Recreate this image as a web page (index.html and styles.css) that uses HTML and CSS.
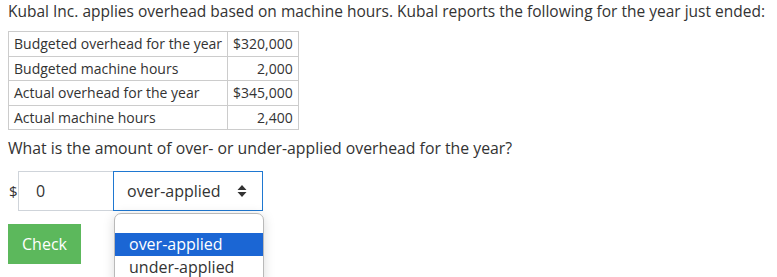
FILE: index.html
```html
<!DOCTYPE html>
<html lang="en">
<head>
    <meta charset="UTF-8">
    <title>Overhead question</title>
    <link rel="stylesheet" href="styles.css">
</head>
<body>
    <div class="question">
        <p class="intro">Kubal Inc. applies overhead based on machine hours. Kubal reports the following for the year just ended:</p>
        <table class="data">
            <tr><td>Budgeted overhead for the year</td><td class="num">$320,000</td></tr>
            <tr><td>Budgeted machine hours</td><td class="num">2,000</td></tr>
            <tr><td>Actual overhead for the year</td><td class="num">$345,000</td></tr>
            <tr><td>Actual machine hours</td><td class="num">2,400</td></tr>
        </table>
        <p class="ask">What is the amount of over- or under-applied overhead for the year?</p>
        <div class="answer">
            <span class="dollar">$</span>
            <input class="amount" type="text" value="0" aria-label="amount">
            <div class="picker">
                <div class="select">
                    <span>over-applied</span>
                    <svg class="arrows" width="10" height="14" viewBox="0 0 10 14">
                        <path d="M5 1 L9.5 6 H0.5 Z M5 13 L9.5 8 H0.5 Z" fill="#333"/>
                    </svg>
                </div>
                <ul class="options">
                    <li class="blank"></li>
                    <li class="active">over-applied</li>
                    <li>under-applied</li>
                </ul>
            </div>
        </div>
        <button class="check-btn">Check</button>
    </div>
</body>
</html>
```

FILE: styles.css
```css
html {
    height: 277px;
}
body {
    font-family: 'Open Sans', sans-serif;
    margin: 0;
    padding: 0 8px;
    height: 277px;
    color: #333333;
    background-color: white;
    overflow: hidden;
}
.intro {
    margin: 0;
    font-size: 15.5px;
    line-height: 23px;
    white-space: nowrap;
}
.data {
    border-collapse: collapse;
    margin-top: 8px;
    font-size: 14px;
}
.data td {
    border: 1px solid #cccccc;
    padding: 2px 5px;
    height: 19.5px;
}
.data .num {
    text-align: right;
}
.ask {
    margin: 7px 0 0;
    font-size: 15.8px;
    line-height: 23px;
}
.answer {
    display: flex;
    align-items: flex-start;
    margin-top: 11px;
    height: 40px;
}
.dollar {
    font-size: 15px;
    line-height: 40px;
    width: 9px;
    padding-left: 1px;
}
.amount {
    width: 95px;
    height: 40px;
    box-sizing: border-box;
    border: 1px solid #cfd4da;
    border-right: none;
    padding: 0 17px;
    font-family: 'Open Sans', sans-serif;
    font-size: 16px;
    color: #333333;
    outline: none;
}
.picker {
    position: relative;
}
.select {
    width: 150px;
    height: 40px;
    box-sizing: border-box;
    border: 1px solid #1f78d1;
    display: flex;
    align-items: center;
    justify-content: space-between;
    padding: 0 15px 0 13px;
    font-size: 16px;
}
.options {
    position: absolute;
    top: 42px;
    left: 1px;
    width: 150px;
    margin: 0;
    padding: 0;
    list-style: none;
    background-color: white;
    border: 1px solid #b9b9b9;
    border-radius: 7px;
    box-shadow: 0 2px 12px rgba(0, 0, 0, 0.15);
    box-sizing: border-box;
    height: 72px;
    overflow: hidden;
    font-size: 16px;
}
.options li {
    height: 23px;
    line-height: 23px;
    padding-left: 14px;
}
.options .blank {
    height: 19px;
}
.options .active {
    background-color: #1b66d4;
    color: white;
}
.check-btn {
    margin-top: 13px;
    width: 73px;
    height: 40px;
    border: none;
    background-color: #5cb85c;
    color: white;
    font-family: 'Open Sans', sans-serif;
    font-size: 16px;
    cursor: pointer;
}
```
